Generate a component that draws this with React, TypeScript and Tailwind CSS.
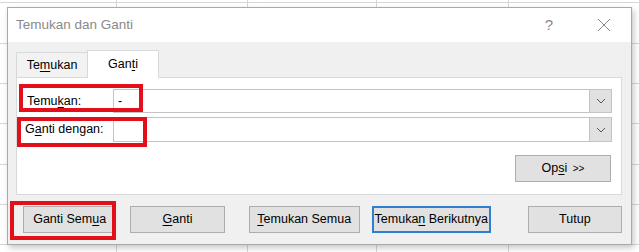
import React from "react";

const U = ({ children }: { children: React.ReactNode }) => (
  <span className="underline underline-offset-[2px] decoration-1">{children}</span>
);

const Chevron = () => (
  <svg width="10" height="6" viewBox="0 0 10 6" fill="none">
    <path d="M1 1 L5 5 L9 1" stroke="#555" strokeWidth="1" />
  </svg>
);

const ComboInput = ({ value }: { value?: string }) => (
  <div className="flex-1 flex h-full border border-[#c4c4c4] bg-white">
    <div className="flex-1 flex items-center pl-[4px] text-[12.5px] text-black">{value}</div>
    <div className="w-[22px] h-full flex items-center justify-center bg-[#e1e1e1] border-l border-[#c4c4c4]">
      <Chevron />
    </div>
  </div>
);

const Btn = ({
  children,
  className = "",
  focused = false,
}: {
  children: React.ReactNode;
  className?: string;
  focused?: boolean;
}) => (
  <button
    className={`h-[27px] flex items-center justify-center whitespace-nowrap bg-[#e1e1e1] text-[12.5px] text-black ${
      focused ? "border-2 border-[#2f7fd1]" : "border border-[#adadad]"
    } ${className}`}
  >
    <span>{children}</span>
  </button>
);

const Grid = () => {
  const cols = [116, 247, 376, 508, 639];
  const rows = [2, 43, 83, 123, 164, 204, 244];
  return (
    <svg className="absolute inset-0" width="640" height="252">
      {cols.map((x) => (
        <line key={`c${x}`} x1={x + 0.5} y1="0" x2={x + 0.5} y2="252" stroke="#d6d6d6" />
      ))}
      {rows.map((y) => (
        <line key={`r${y}`} x1="0" y1={y + 0.5} x2="640" y2={y + 0.5} stroke="#d6d6d6" />
      ))}
    </svg>
  );
};

export default function App() {
  return (
    <div className="relative w-[640px] h-[252px] bg-white overflow-hidden font-['Liberation_Sans',sans-serif]">
      <Grid />

      {/* dialog */}
      <div className="absolute left-[7px] top-[7px] w-[625px] h-[238px] flex flex-col border border-[#a9a9a9] bg-[#f0f0f0] shadow-[2px_3px_6px_rgba(0,0,0,0.22)]">
        <div className="h-[34px] bg-white flex items-center pl-[8px] pr-[20px]">
          <span className="flex-1 text-[13.5px] text-[#8a8a8a]">Temukan dan Ganti</span>
          <span className="text-[15px] text-[#8a8a8a] mr-[44px]">?</span>
          <svg width="14" height="14" viewBox="0 0 14 14">
            <path d="M1 1 L13 13 M13 1 L1 13" stroke="#8a8a8a" strokeWidth="1" />
          </svg>
        </div>

        <div className="flex-1 flex flex-col pl-[8px] pr-[9px]">
          {/* tabs */}
          <div className="mt-[8px] h-[27px] flex items-end">
            <div className="w-[71px] h-[25px] flex items-center justify-center border border-b-0 border-r-0 border-[#d9d9d9] bg-[#f2f2f2] text-[12.5px] text-black">
              <span>
                Te<U>m</U>ukan
              </span>
            </div>
            <div className="relative z-10 w-[72px] h-[28px] -mb-px flex items-center justify-center border border-b-0 border-[#d9d9d9] bg-white text-[12.5px] text-black">
              <span>
                Gan<U>t</U>i
              </span>
            </div>
          </div>

          {/* panel */}
          <div className="h-[118px] border border-[#d9d9d9] bg-white flex flex-col pt-[11px] pr-[9px]">
            <div className="h-[24px] flex items-center">
              <div className="w-[96px] pl-[10px] text-[12.5px] text-black">
                Temu<U>k</U>an:
              </div>
              <ComboInput value="-" />
            </div>
            <div className="mt-[4px] h-[25px] flex items-center">
              <div className="w-[96px] pl-[8px] text-[12.5px] text-black">
                G<U>a</U>nti dengan:
              </div>
              <ComboInput />
            </div>
            <div className="mt-[13px] flex justify-end pr-[1px]">
              <Btn className="w-[96px]">
                Op<U>s</U>i <span className="text-[10px] ml-[2px]">&gt;&gt;</span>
              </Btn>
            </div>
          </div>

          {/* bottom buttons */}
          <div className="mt-[11px] flex">
            <Btn className="ml-[7px] w-[95px]">
              Ganti Sem<U>u</U>a
            </Btn>
            <Btn className="ml-[14px] w-[96px]">
              <U>G</U>anti
            </Btn>
            <Btn className="ml-[24px] w-[113px]">
              <U>T</U>emukan Semua
            </Btn>
            <Btn focused className="ml-[12px] w-[121px]">
              Temuka<U>n</U> Berikutnya
            </Btn>
            <Btn className="ml-[37px] w-[96px]">Tutup</Btn>
          </div>
        </div>
      </div>

      {/* red annotation boxes */}
      <div className="absolute left-[19px] top-[84px] w-[124px] h-[28px] border-4 border-[#e3101b]" />
      <div className="absolute left-[17px] top-[117px] w-[130px] h-[30px] border-4 border-[#e3101b]" />
      <div className="absolute left-[10px] top-[201px] w-[106px] h-[39px] border-4 border-[#e3101b]" />
    </div>
  );
}
